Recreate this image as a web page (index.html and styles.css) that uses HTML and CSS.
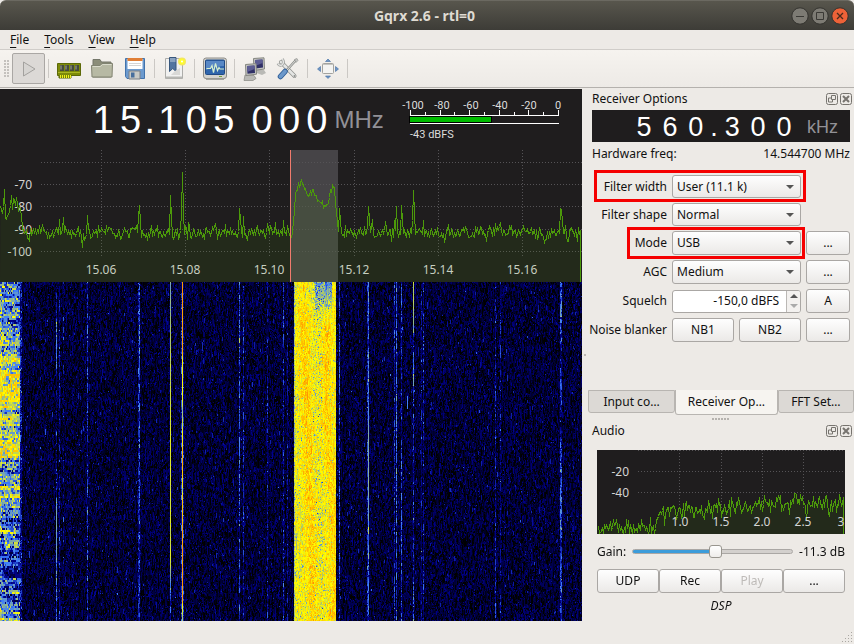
FILE: index.html
```html
<!DOCTYPE html>
<html lang="en">
<head>
<meta charset="utf-8">
<title>Gqrx 2.6 - rtl=0</title>
<link rel="stylesheet" href="styles.css">
</head>
<body>
<div class="window">
  <header class="titlebar">
    <h1>Gqrx 2.6 - rtl=0</h1>
    <div class="window-buttons">
      <button aria-label="Minimize"><svg viewBox="0 0 18 18"><circle cx="9" cy="9" r="8.2" fill="#7d7b74" stroke="#33322e"/><path d="M5 9.5h8" stroke="#3a3935"/></svg></button>
      <button aria-label="Maximize"><svg viewBox="0 0 18 18"><circle cx="9" cy="9" r="8.2" fill="#7d7b74" stroke="#33322e"/><path d="M5.500 5.500h7v7h-7z" fill="none" stroke="#3a3935"/></svg></button>
      <button aria-label="Close"><svg viewBox="0 0 18 18"><circle cx="9" cy="9" r="8.2" fill="#ee6238" stroke="#33322e"/><path d="M6 6l6 6M12 6l-6 6" stroke="#4a2a1c" stroke-width="1.300"/></svg></button>
    </div>
  </header>

  <nav class="menubar">
    <button><u>F</u>ile</button>
    <button><u>T</u>ools</button>
    <button><u>V</u>iew</button>
    <button><u>H</u>elp</button>
  </nav>

  <div class="toolbar" role="toolbar">
    <span class="grip"></span>
    <button class="pressed" aria-label="Start DSP"><svg viewBox="0 0 24 24"><path d="M6.500 5L18 12L6.500 19z" fill="#d6d4d1" stroke="#a3a19e"/></svg></button>
    <span class="sep"></span>
    <button aria-label="Configure devices"><svg viewBox="0 0 24 24">
      <path d="M.5 6.500h23v12H14v2.500H2v-2.500H.5z" fill="#7d8a0a" stroke="#5c6908"/>
      <path d="M3 8h4v6H3zM8 8h4v6H8zM13 8h4v6h-4zM18 8h4v6h-4z" fill="#454b3c"/>
      <path d="M4 8.500v4M9 8.500v4M14 8.500v4M19 8.500v4" stroke="#a2a59c"/>
      <path d="M3.500 18v3M5.500 18v3M7.500 18v3M9.500 18v3M11.500 18v3M13.500 18v3" stroke="#f0f01c"/>
      <path d="M1 15.500h22" stroke="#a9b523"/></svg></button>
    <button aria-label="Open settings"><svg viewBox="0 0 24 24">
      <path d="M3 2.500h7l1.500 2.500h9.500v15H3z" fill="#8b8d79" stroke="#75776a"/>
      <path d="M1.500 8.500H10l2-2h10.500l-.5 13.500h-20z" fill="#b7b9a4" stroke="#818371"/>
      <path d="M2.500 9.500h8l2-2h9" fill="none" stroke="#d9dacb"/></svg></button>
    <button aria-label="Save settings"><svg viewBox="0 0 24 24">
      <path d="M2.500 1.500h19v20H4l-1.500-2z" fill="#6c9ace" stroke="#4273ac"/>
      <path d="M4.500 2h15v10h-15z" fill="#fff"/><path d="M4.500 1h15v3h-15z" fill="#e07e35"/>
      <path d="M6 6.500h12M6 8.500h12" stroke="#d5d5d5"/>
      <path d="M6 14h11v8H6z" fill="#c9cac6" stroke="#7b8088"/><path d="M8 15.500h3.500v5H8z" fill="#476e9d"/></svg></button>
    <span class="sep"></span>
    <button aria-label="Bookmarks"><svg viewBox="0 0 24 24">
      <path d="M2.500 1.500h17v20h-17z" fill="#f1f1f0" stroke="#adadaa"/><path d="M3 19.500h16v2H3z" fill="#b6b6b3"/>
      <path d="M6.500.5h6.500v14l-3.250-3L6.500 14.500z" fill="#5375a0" stroke="#38577c"/><path d="M7 1h5.500v4H7z" fill="#8aa2bf"/>
      <path d="M12 14l5-3v7H8z" fill="#d8d8d6"/>
      <circle cx="19" cy="4.500" r="4" fill="#f4e85b"/><circle cx="19" cy="4.500" r="2.500" fill="#ffff28"/><circle cx="19" cy="4.500" r="1" fill="#fff"/></svg></button>
    <span class="sep"></span>
    <button aria-label="Remote monitor"><svg viewBox="0 0 24 24">
      <rect x=".5" y="1" width="23" height="20.500" rx="2.500" fill="#d4d3ce" stroke="#8e8d88"/>
      <path d="M3 21.500h18v1.500H3z" fill="#a6a6a1"/>
      <rect x="2.500" y="3" width="19" height="14.500" rx="1" fill="#2f65ac" stroke="#214a84"/>
      <path d="M3 4h18v5Q12 9 3 13z" fill="#5888c5"/>
      <path d="M3.500 11.500h4l1.500-3 1.500 7 2-9 2 7 1.500-3 1 1.500h4" fill="none" stroke="#d5efcf" stroke-width="1.200"/>
      <path d="M16 19.500h3" stroke="#73a33c"/></svg></button>
    <span class="sep"></span>
    <button aria-label="Remote control"><svg viewBox="0 0 24 24">
      <path d="M13 12l8 1 2 3-4 2-8-3z" fill="#b9b9b5"/>
      <path d="M10.500 1.500L21 .8l.5 11.200-10.500 1.500z" fill="#c5c6c2" stroke="#858680"/><path d="M12 3l7.500-.6.500 8-7.500 1z" fill="#303066"/><path d="M12 3l7.500-.6.100 3.500-7.500 3z" fill="#5d5d93"/>
      <path d="M2 18l9 .5 2 3-3 2H1z" fill="#b9b9b5" stroke="#868781" stroke-width=".7"/>
      <path d="M2.500 7.500L13 6.700l.5 10.500L3 18.500z" fill="#c5c6c2" stroke="#858680"/><path d="M4 9l7.500-.6.500 7.600-7.500.8z" fill="#303066"/><path d="M4 9l7.500-.6.100 3.500L4.200 15z" fill="#5d5d93"/></svg></button>
    <button aria-label="Preferences"><svg viewBox="0 0 24 24">
      <path d="M5 5l13.500 14" stroke="#8e908d" stroke-width="4" stroke-linecap="round"/>
      <path d="M5 5l13.500 14" stroke="#e4e5e3" stroke-width="2.600" stroke-linecap="round"/>
      <path d="M2 6.500Q3 9 6 8Q8.500 6 6.500 2" fill="none" stroke="#999b98" stroke-width="2.800"/>
      <path d="M2 6.500Q3 9 6 8Q8.500 6 6.500 2" fill="none" stroke="#e4e5e3" stroke-width="1.400"/>
      <path d="M20.500 2.500L10 14" stroke="#8b8d89" stroke-width="2.500"/><path d="M20.500 2.500L10 14" stroke="#e1e1df"/>
      <path d="M18.500 2.500l2.500-1 1 2-2 2z" fill="#c4c5c2" stroke="#8b8d89" stroke-width=".6"/>
      <path d="M9 14.500l-4.500 5" stroke="#2d5c96" stroke-width="5.500" stroke-linecap="round"/><path d="M9 14.500l-4.500 5" stroke="#6c98ca" stroke-width="3.800" stroke-linecap="round"/>
      <circle cx="18.500" cy="19" r="1" fill="#8e908d"/></svg></button>
    <span class="sep"></span>
    <button aria-label="Full screen"><svg viewBox="0 0 24 24">
      <rect x="6.500" y="6.500" width="11" height="10" rx="1" fill="#f4f4f2" stroke="#a3a39f"/><path d="M7 7.500h10" stroke="#c5c5c1"/>
      <path d="M12 2l2.500 2.500h-5zM12 21.500l2.500-2.500h-5zM1.500 12l3-2.500v5zM22.500 12l-3-2.500v5z" fill="#6d95c4" stroke="#3f6ba1" stroke-width=".6"/></svg></button>
    <span class="sep"></span>
  </div>

  <main class="workspace">
    <section class="receiver">
      <div class="tuner">
        <div class="freq freq-main"><span>1</span><span>5</span><i>.</i><span>1</span><span>0</span><span>5</span><i></i><span>0</span><span>0</span><span>0</span></div>
        <div class="unit unit-main">MHz</div>
        <svg class="meter" viewBox="0 0 165 48" role="img" aria-label="Signal level">
          <g id="meter-ticks" stroke="#fff"></g>
          <path d="M10 20.500h149M10 28.500h149" stroke="#fff"/>
          <rect x="9" y="21" width="83" height="7" fill="#000"/>
          <rect x="10" y="22" width="81" height="5" fill="#00bb00"/>
          <g class="meter-text" text-anchor="middle"><text x="13" y="14">-100</text><text x="42" y="14">-80</text><text x="71" y="14">-60</text><text x="100" y="14">-40</text><text x="129" y="14">-20</text><text x="158" y="14">0</text></g>
          <text class="meter-text" x="10" y="43">-43 dBFS</text>
        </svg>
      </div>
      <svg class="spectrum" viewBox="0 0 582 132" role="img" aria-label="Spectrum">
        <rect x="290" width="48" height="132" fill="#464447"/>
        <path class="grid" d="M41 12.500H582M41 34.500H582M41 56.500H582M41 79.500H582M41 101.500H582M101.500 0V106M185.500 0V106M269.500 0V106M354.500 0V106M438.500 0V106M522.500 0V106"/>
        <g class="axis" text-anchor="end"><text x="32" y="39">-70</text><text x="32" y="61">-80</text><text x="32" y="84">-90</text><text x="32" y="106">-100</text></g>
        <g class="axis" text-anchor="middle"><text x="101" y="124">15.06</text><text x="185" y="124">15.08</text><text x="269" y="124">15.10</text><text x="354" y="124">15.12</text><text x="438" y="124">15.14</text><text x="522" y="124">15.16</text></g>
        <path class="trace-fill" id="spectrum-fill"/>
        <path class="trace" id="spectrum-line"/>
        <path d="M290.500 0V132" stroke="#f07b6d"/>
      </svg>
      <canvas class="waterfall" id="waterfall" width="582" height="339"></canvas>
    </section>

    <div class="splitter"></div>

    <aside class="docks">
      <section class="dock options">
        <header class="dock-title"><h2>Receiver Options</h2>
          <button aria-label="Float receiver options"><svg viewBox="0 0 12 12"><rect x=".5" y=".5" width="11" height="11" rx="2"/><path d="M5.500 2.500h4v4h-4zM5.500 5h-3v4h4V7"/></svg></button>
          <button aria-label="Close receiver options"><svg viewBox="0 0 12 12"><rect x=".5" y=".5" width="11" height="11" rx="2"/><path d="M3 3l6 6M9 3l-6 6" stroke-width="2"/></svg></button>
        </header>
        <div class="offset">
          <div class="freq freq-offset"><span>5</span><span>6</span><span>0</span><i>.</i><span>3</span><span>0</span><span>0</span></div>
          <div class="unit unit-offset">kHz</div>
        </div>
        <div class="hardware"><span>Hardware freq:</span><span>14.544700 MHz</span></div>
        <div class="form">
          <div class="row marked-wide">
            <label for="fw">Filter width</label>
            <div class="combo"><select id="fw"><option>User (11.1 k)</option></select></div>
          </div>
          <div class="row">
            <label for="fs">Filter shape</label>
            <div class="combo"><select id="fs"><option>Normal</option></select></div>
          </div>
          <div class="row tall marked-narrow">
            <label for="mode">Mode</label>
            <div class="combo"><select id="mode"><option>USB</option></select></div>
            <button class="btn" aria-label="Mode options">...</button>
          </div>
          <div class="row tall">
            <label for="agc">AGC</label>
            <div class="combo"><select id="agc"><option>Medium</option></select></div>
            <button class="btn" aria-label="AGC options">...</button>
          </div>
          <div class="row tall">
            <label for="sql">Squelch</label>
            <div class="spin"><input id="sql" type="text" value="-150,0 dBFS"><span class="steps"><button class="up" aria-label="Increase"></button><button class="down" aria-label="Decrease" disabled></button></span></div>
            <button class="btn">A</button>
          </div>
          <div class="row tall">
            <span class="label">Noise blanker</span>
            <div class="pair"><button class="btn">NB1</button><button class="btn">NB2</button></div>
            <button class="btn" aria-label="Noise blanker options">...</button>
          </div>
        </div>
        <div class="tabs" role="tablist">
          <button role="tab">Input co…</button>
          <button role="tab" class="active" aria-selected="true">Receiver Op…</button>
          <button role="tab">FFT Set…</button>
        </div>
      </section>

      <div class="splitter-row"></div>

      <section class="dock audio">
        <header class="dock-title"><h2>Audio</h2>
          <button aria-label="Float audio"><svg viewBox="0 0 12 12"><rect x=".5" y=".5" width="11" height="11" rx="2"/><path d="M5.500 2.500h4v4h-4zM5.500 5h-3v4h4V7"/></svg></button>
          <button aria-label="Close audio"><svg viewBox="0 0 12 12"><rect x=".5" y=".5" width="11" height="11" rx="2"/><path d="M3 3l6 6M9 3l-6 6" stroke-width="2"/></svg></button>
        </header>
        <div class="audio-body">
          <svg class="audio-plot" viewBox="0 0 248 84" role="img" aria-label="Audio spectrum">
            <path class="grid" d="M41 .5H247M41 21.500H247M41 42.500H247M82.500 0V60M124.500 0V60M165.500 0V60M206.500 0V60"/>
            <g class="axis" text-anchor="end"><text x="32" y="26">-20</text><text x="32" y="47">-40</text></g>
            <path class="trace-fill" id="audio-fill"/>
            <path class="trace" id="audio-line"/>
            <g class="axis" text-anchor="middle"><text x="83" y="76">1.0</text><text x="124" y="76">1.5</text><text x="165" y="76">2.0</text><text x="206" y="76">2.5</text><text x="249" y="76">3.0</text></g>
          </svg>
          <div class="gain"><label for="gain">Gain:</label><input id="gain" type="range" min="0" max="100" value="52"><output for="gain">-11.3 dB</output></div>
          <div class="audio-buttons"><button class="btn">UDP</button><button class="btn">Rec</button><button class="btn" disabled>Play</button><button class="btn" aria-label="Audio options">...</button></div>
          <div class="dsp">DSP</div>
        </div>
      </section>
    </aside>
  </main>
  <footer class="statusbar"><svg class="resize" viewBox="0 0 12 12"><path d="M10 1h1v1h-1zM7 4h1v1H7zM10 4h1v1h-1zM4 7h1v1H4zM7 7h1v1H7zM10 7h1v1h-1zM1 10h1v1H1zM4 10h1v1H4zM7 10h1v1H7zM10 10h1v1h-1z" fill="#aaa7a2"/></svg></footer>
</div>
<script src="app.js"></script>
</body>
</html>
```
FILE: styles.css
```css
* { box-sizing: border-box; }

body {
  margin: 0;
  background: #edeae6;
  color: #111;
  font: 12px/16px "Noto Sans", "Open Sans", sans-serif;
}

button, input, select, output { font: inherit; color: inherit; margin: 0; }
button { padding: 0; border: 0; background: none; }
h1, h2 { margin: 0; font-size: inherit; font-weight: normal; }

.window { display: flex; flex-direction: column; height: 100vh; }

/* Title bar */
.titlebar {
  display: grid;
  grid-template-columns: 1fr auto 1fr;
  align-items: center;
  height: 30px;
  padding-right: 5px;
  border-top: 1px solid #6b6961;
  border-radius: 6px 6px 0 0;
  background: linear-gradient(#58564d, #3d3c37);
}
.titlebar h1 { grid-column: 2; color: #dfdbd2; font-size: 14px; font-weight: bold; }
.window-buttons { display: flex; justify-content: flex-end; gap: 2px; }
.window-buttons button, .window-buttons svg { display: block; width: 18px; height: 18px; }

/* Menus */
.menubar {
  display: flex;
  gap: 15px;
  height: 20px;
  padding: 0 10px;
  border-bottom: 1px solid #d0cdc9;
}
.menubar u { text-underline-offset: 3px; }

/* Toolbar */
.toolbar {
  display: flex;
  align-items: center;
  height: 38px;
  border-bottom: 1px solid #b4b1ad;
  background: linear-gradient(#f6f3ef, #edeae6);
}
.toolbar button { display: grid; place-items: center; width: 33px; height: 31px; }
.toolbar button svg { width: 24px; height: 24px; }
.toolbar .pressed { border: 1px solid #aaa7a4; border-radius: 2px; background: #dcd9d6; }
.grip {
  width: 5px;
  height: 18px;
  margin: 0 3px 0 4px;
  background: radial-gradient(circle at 1px 1px, #c4c1bd 1px, transparent 1px) 0 0 / 3px 3px;
}
.sep { width: 1px; height: 19px; margin: 0 3px; background: #cbc8c4; }

/* Main area */
.workspace { display: flex; flex: 1; min-height: 0; padding-top: 1px; }
.receiver { display: flex; flex: 1; flex-direction: column; min-width: 0; background: #1f1d1e; }

.tuner { display: flex; align-items: flex-start; justify-content: center; height: 61px; padding-left: 72px; }
.freq { display: flex; color: #fff; font-family: "Liberation Sans", sans-serif; text-align: center; }
.freq span { flex: 5; }
.freq i { flex: 2; font-style: normal; }
.freq-main { width: 241px; padding-top: 11px; font-size: 38px; line-height: 40px; }
.unit { color: #929196; font-family: "Liberation Sans", sans-serif; }
.unit-main { width: 69px; padding: 17px 0 0 4px; font-size: 24px; line-height: 28px; }
.meter { width: 165px; height: 48px; margin-top: 6px; }
.meter-text { fill: #dcdcdc; font: 11px Roboto, sans-serif; }

.spectrum { display: block; flex: none; width: 100%; }
.grid { fill: none; stroke: #555356; stroke-dasharray: 1 2; shape-rendering: crispEdges; }
.axis { fill: #d4d4d4; font: 12px "Noto Sans", sans-serif; }
.trace { fill: none; stroke: #4c9a0a; stroke-width: 1; shape-rendering: crispEdges; }
.trace-fill { fill: #4c9a0a; fill-opacity: .1; }
.waterfall { display: block; flex: 1; width: 100%; min-height: 0; image-rendering: pixelated; }

.splitter {
  width: 6px;
  background: radial-gradient(circle at 1px 1px, #bbb8b4 1px, transparent 1px) center / 3px 3px no-repeat;
}
.splitter-row {
  align-self: center;
  width: 18px;
  height: 3px;
  margin: 3px 0 0;
  background: radial-gradient(circle at 1px 1px, #b5b2ae 1px, transparent 1px) 0 0 / 3px 3px;
}

/* Docks */
.docks { display: flex; flex: none; flex-direction: column; width: 266px; }
.options { display: flex; flex: 1; flex-direction: column; }
.dock-title { display: flex; align-items: center; gap: 2px; height: 21px; padding: 0 2px 2px 4px; }
.dock-title h2 { flex: 1; }
.dock-title button, .dock-title svg { display: block; width: 12px; height: 12px; }
.dock-title svg { fill: none; stroke: #77746f; }

.offset {
  display: flex;
  justify-content: flex-end;
  height: 32px;
  margin: 0 4px;
  padding-right: 11px;
  background: #1f1d1e;
}
.freq-offset { width: 166px; font-size: 27px; line-height: 34px; }
.unit-offset { width: 42px; padding-left: 10px; font-size: 18px; line-height: 34px; }
.hardware { display: flex; justify-content: space-between; padding: 4px 4px 0; }

.form { display: flex; flex-direction: column; gap: 5px; padding: 13px 4px 0 0; }
.row {
  position: relative;
  display: grid;
  grid-template-columns: 79px 129px 44px;
  column-gap: 5px;
  align-items: center;
  height: 23px;
}
.row.tall { height: 24px; }
.row > label, .label { text-align: right; white-space: nowrap; justify-self: end; }
.marked-wide::after, .marked-narrow::after {
  content: "";
  position: absolute;
  top: -5px;
  bottom: -4px;
  left: 6px;
  right: 44px;
  border: 3px solid #f50000;
  pointer-events: none;
}
.marked-narrow::after { top: -4px; left: 39px; right: 45px; }

.btn, .combo, .spin {
  height: 24px;
  border: 1px solid #aaa7a4;
  border-radius: 3px;
  background: linear-gradient(#fefefe, #ebe9e7);
}
.btn { flex: 1; text-align: center; }
.btn:disabled { color: #bebbb8; }
.combo { position: relative; height: 100%; }
.combo select {
  width: 100%;
  height: 100%;
  padding: 0 20px 0 4px;
  border: 0;
  background: none;
  appearance: none;
}
.combo::after {
  content: "";
  position: absolute;
  top: 9px;
  right: 6px;
  border: 4px solid transparent;
  border-top: 4px solid #555;
  border-bottom: 0;
  pointer-events: none;
}
.spin { display: flex; height: 23px; background: #fff; overflow: hidden; }
.spin input { flex: 1; width: 0; padding: 0 7px 0 0; border: 0; background: none; text-align: right; }
.steps { display: grid; place-items: center; width: 14px; border-left: 1px solid #bbb8b5; background: #f3f1ef; }
.steps button { width: 0; height: 0; border: 4px solid transparent; }
.steps .up { border-top: 0; border-bottom-color: #555; }
.steps .down { border-bottom: 0; border-top-color: #aaa; }
.pair { display: flex; gap: 5px; }

.tabs { display: flex; align-items: flex-start; height: 25px; margin-top: auto; }
.tabs button {
  flex: 87;
  height: 23px;
  border: 1px solid #b8b5b1;
  border-radius: 0 0 3px 3px;
  background: #dcd9d5;
  white-space: nowrap;
}
.tabs .active { flex: 103; height: 25px; border-top: 0; background: #f6f4f0; }
.tabs button:last-child { flex: 76; }

.audio { flex: none; }
.audio-body { padding: 8px 9px 7px; }
.audio-plot { display: block; width: 100%; background: #1f1d1e; }
.gain { display: flex; align-items: center; gap: 6px; height: 35px; }
.gain input { flex: 1; min-width: 0; height: 16px; appearance: none; background: none; }
.gain input::-webkit-slider-runnable-track {
  height: 5px;
  border: 1px solid #aaa7a4;
  border-radius: 3px;
  background: linear-gradient(to right, #3c9cda 52%, #d3d0cd 52%);
}
.gain input::-webkit-slider-thumb {
  appearance: none;
  width: 13px;
  height: 13px;
  margin-top: -5px;
  border: 1px solid #99968f;
  border-radius: 3px;
  background: linear-gradient(#fff, #efedeb);
}
.audio-buttons { display: flex; }
.dsp { margin-top: 5px; font-style: italic; text-align: center; }

.statusbar { display: flex; align-items: flex-end; justify-content: flex-end; height: 23px; padding: 0 1px 1px 0; }
.resize { width: 12px; height: 12px; }
```
FILE: app.js
```js
// Deterministic noise source so that every load draws the same signal.
let seed = 20177;
function rnd() {
  seed = (seed * 1664525 + 1013904223) >>> 0;
  return seed / 4294967296;
}
const gauss = () => rnd() + rnd() + rnd() - 1.5;
const clamp = (v, a, b) => Math.max(a, Math.min(b, v));

// Level meter scale
document.getElementById('meter-ticks').innerHTML =
  Array.from({ length: 11 }, (_, i) => `<path d="M${Math.round(i * 14.8) + 10.5} ${i % 2 ? 17 : 15}V20"/>`).join('');

function drawTrace(id, ys, bottom) {
  const pts = ys.map((y, x) => `${x + 0.5} ${Math.round(y) + 0.5}`).join('L');
  document.getElementById(id + '-line').setAttribute('d', `M${pts}V${bottom}`);
  document.getElementById(id + '-fill').setAttribute('d', `M0 ${bottom}L${pts}V${bottom}z`);
}

// Linear interpolation through [x, y] anchors
function envelope(anchors, x) {
  for (let i = 1; i < anchors.length; i++) {
    const [x0, y0] = anchors[i - 1], [x1, y1] = anchors[i];
    if (x <= x1) return y0 + (y1 - y0) * (x - x0) / (x1 - x0);
  }
  return anchors[anchors.length - 1][1];
}

const left = [[0, 56], [2, 62], [3, 56], [4, 37], [5, 66], [6, 68], [8, 63], [9, 62], [11, 44], [12, 58], [13, 47], [15, 54], [16, 47], [18, 61], [19, 54], [21, 66], [22, 78], [24, 82], [26, 80]];
const band = [[292, 80], [293, 72], [295, 45], [297, 37], [299, 38], [301, 29], [303, 35], [306, 45], [309, 46], [313, 39], [316, 45], [319, 50], [323, 54], [325, 55], [328, 50], [330, 38], [334, 37], [336, 62], [338, 79]];
const peaks = { 42: 74, 59: 69, 63: 67, 78: 76, 82: 97, 87: 65, 98: 75, 106: 75, 138: 66, 139: 55, 140: 71, 157: 75, 170: 45, 171: 67, 181: 62, 182: 22, 183: 62, 188: 73, 214: 76, 239: 58, 240: 69, 243: 66, 267: 73, 275: 72, 283: 70, 287: 75, 339: 58, 340: 70, 345: 75, 364: 76, 368: 56, 369: 69, 372: 69, 385: 71, 394: 70, 396: 56, 401: 55, 402: 70, 412: 70, 413: 40, 414: 62, 423: 70, 437: 77, 444: 92, 495: 73, 500: 72, 509: 75, 523: 76, 560: 58, 561: 60, 562: 70 };

const spectrum = [];
for (let x = 0; x < 581; x++) {
  let y = 82.5 + gauss() * 7;
  if (x <= 26) y = envelope(left, x) + gauss() * 2;
  else if (x >= 292 && x <= 338) y = envelope(band, x) + gauss() * 4;
  else if (peaks[x] !== undefined) y = peaks[x];
  spectrum.push(y);
}
drawTrace('spectrum', spectrum, 132);

const audioEnvelope = [[0, 78], [56, 77], [58, 74], [61, 62], [64, 61], [100, 58], [150, 55], [215, 52], [247, 54]];
const audio = [];
for (let x = 0; x < 247; x++) {
  let y = envelope(audioEnvelope, x) + gauss() * 9;
  if (x > 58 && rnd() < 0.06) y += 8;
  audio.push(Math.min(y, 83));
}
drawTrace('audio', audio, 84);

// Waterfall colour scale: black, blue, light blue, yellow, red
function colour(i) {
  if (i < 20) return [0, 0, 0];
  if (i < 70) return [0, 0, 140 * (i - 20) / 50];
  if (i < 100) return [60 * (i - 70) / 30, 125 * (i - 70) / 30, 115 * (i - 70) / 30 + 140];
  if (i < 150) return [195 * (i - 100) / 50 + 60, 130 * (i - 100) / 50 + 125, 255 - 255 * (i - 100) / 50];
  return [255, 255 - 255 * (i - 150) / 100, 0];
}

// Carriers: column, then [row, level] anchors over time
const carriers = [
  [56, [[0, 40], [28, 60], [35, 92], [85, 92], [97, 50], [148, 50], [150, 88], [180, 60], [208, 60], [225, 115], [270, 110], [290, 90], [338, 86]]],
  [59, [[0, 64], [338, 62]]], [63, [[0, 60], [60, 50], [338, 56]]],
  [87, [[0, 78], [160, 72], [230, 82], [338, 72]]],
  [138, [[0, 70], [338, 72]]], [139, [[0, 88], [130, 84], [338, 84]]],
  [170, [[0, 115], [80, 132], [160, 140], [280, 140], [295, 112], [315, 76], [338, 65]]],
  [181, [[0, 72], [338, 72]]], [183, [[0, 60], [338, 72]]],
  [182, [[0, 190], [70, 185], [75, 155], [118, 150], [127, 125], [148, 145], [178, 182], [204, 160], [207, 115], [212, 165], [250, 185], [315, 190], [325, 150], [338, 125]]],
  [239, [[0, 84], [338, 82]]], [243, [[0, 70], [338, 66]]],
  [267, [[0, 60], [338, 68]]], [283, [[0, 76], [150, 68], [338, 68]]], [287, [[0, 60], [338, 62]]],
  [339, [[0, 84], [150, 82], [338, 78]]],
  [367, [[0, 74], [338, 72]]], [368, [[0, 95], [120, 100], [150, 118], [200, 120], [270, 96], [338, 88]]],
  [394, [[0, 76], [338, 72]]], [396, [[0, 86], [160, 90], [338, 78]]],
  [401, [[0, 92], [35, 78], [150, 70], [170, 90], [338, 80]]],
  [413, [[0, 135], [40, 122], [52, 90], [56, 50], [70, 65], [76, 90], [100, 108], [114, 88], [120, 72], [338, 74]]],
  [421, [[0, 64], [338, 62]]], [423, [[0, 68], [338, 66]]],
  [495, [[0, 66], [338, 72]]], [500, [[0, 62], [338, 58]]],
  [560, [[0, 84], [45, 98], [70, 60], [105, 88], [135, 50], [180, 92], [338, 82]]],
  [561, [[0, 88], [45, 100], [70, 60], [105, 84], [135, 50], [180, 86], [338, 82]]]
];

const canvas = document.getElementById('waterfall');
const W = canvas.width, H = canvas.height;
const ctx = canvas.getContext('2d');
const image = ctx.createImageData(W, H);
const noise = new Float32Array(W);
const leftRow = [];
let rowLevel = 0;

for (let y = 0; y < H; y++) {
  if (y % 4 === 0) rowLevel = gauss() * 22;
  const base = envelope([[0, 98], [20, 108], [60, 120], [90, 132], [120, 136], [130, 105], [140, 132], [175, 138], [187, 102], [200, 122], [222, 118], [230, 82], [250, 108], [270, 78], [295, 86], [325, 104], [338, 110]], y);
  for (let x = 0; x < W; x++) {
    if (y === 0 || rnd() < 0.55) noise[x] = 38 + gauss() * 32 + (rnd() < 0.015 ? 20 : 0);
    let v = noise[x];
    if (x < 20) {
      if (y % 2 === 0) leftRow[x] = rnd() < 0.35 && x ? leftRow[x - 1] : base + rowLevel + gauss() * 42;
      v = leftRow[x];
      if (x < 2) v += 14;
      v = clamp(v, 30, 175);
    } else if (x < 22) {
      v += 32;
    } else if (x >= 294 && x < 336) {
      // Two broad orange ridges drift across the pass band
      const d1 = Math.abs(x - (302 + y * 0.035)), d2 = Math.abs(x - 330 + 4 * Math.sin(y / 60));
      v = 150 + noise[x] * 0.7 - 26 + 18 * Math.exp(-d1 * d1 / 34) + 18 * Math.exp(-d2 * d2 / 30);
      if (y < 46 && x > 314 && x < 332) v -= (46 - y) * (x > 324 ? 1.2 : 0.6);
      if (y < 25) v -= 8;
      if (rnd() < 0.09) v -= 26;
      if (x > 312 && x < 323 && rnd() < 0.15) v -= 25;
      if (x === 294) v -= 20;
      v = clamp(v, 84, 195);
    }
    const k = (y * W + x) * 4;
    const c = colour(v);
    image.data[k] = c[0]; image.data[k + 1] = c[1]; image.data[k + 2] = c[2]; image.data[k + 3] = 255;
  }
  for (const [x, anchors] of carriers) {
    const level = envelope(anchors, y);
    const spread = level > 105 ? 6 : 32;
    const c = colour(level + (noise[x] - 38) / 32 * spread);
    const k = (y * W + x) * 4;
    image.data[k] = c[0]; image.data[k + 1] = c[1]; image.data[k + 2] = c[2];
  }
}
ctx.putImageData(image, 0, 0);
```
